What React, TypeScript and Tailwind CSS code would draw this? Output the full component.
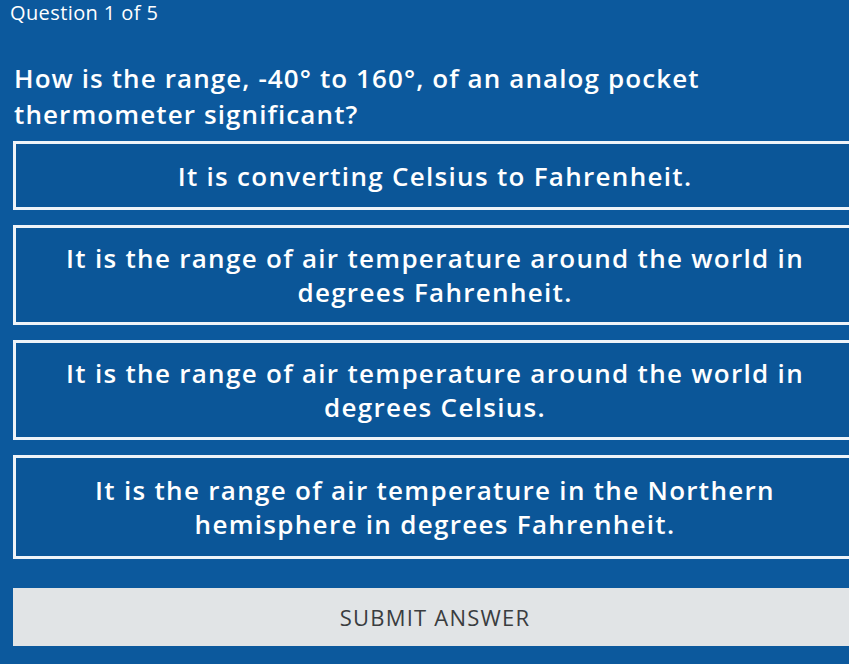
import React from 'react'

const OPTIONS = [
  'It is converting Celsius to Fahrenheit.',
  'It is the range of air temperature around the world in degrees Fahrenheit.',
  'It is the range of air temperature around the world in degrees Celsius.',
  'It is the range of air temperature in the Northern hemisphere in degrees Fahrenheit.',
]

const HEIGHTS = ['h-[69px]', 'h-[100px]', 'h-[100px]', 'h-[104px]']

export default function App() {
  return (
    <div
      className="h-[664px] w-[849px] overflow-hidden bg-[#0c599d] text-white"
      style={{ fontFamily: '"Open Sans", "DejaVu Sans", sans-serif' }}
    >
      <div className="pl-[10px] pt-[1px] text-[20px] font-medium leading-6 tracking-[0.4px]">Question 1 of 5</div>

      <h1 className="mt-[35px] w-[800px] pl-[14px] text-[26px] font-semibold leading-[36px] tracking-[1.1px]">
        How is the range, -40° to 160°, of an analog pocket
        <br />
        thermometer significant?
      </h1>

      <div className="ml-[13px] mr-[-8px] mt-[9px] flex flex-col gap-[15px]">
        {OPTIONS.map((opt, i) => (
          <button
            key={i}
            type="button"
            className={`flex items-center justify-center border-[3px] border-[#eef3f8] bg-[#0b5698] text-center text-[26px] font-semibold leading-[34px] tracking-[1.3px] ${HEIGHTS[i]}`}
          >
            <span className="max-w-[760px]">{opt}</span>
          </button>
        ))}
      </div>

      <div className="ml-[13px] mr-[-8px] mt-[29px] flex h-[58px] items-center justify-center bg-[#e1e4e6] text-[22px] font-medium tracking-[1.2px] text-[#3a3d40]">
        SUBMIT ANSWER
      </div>
    </div>
  )
}
